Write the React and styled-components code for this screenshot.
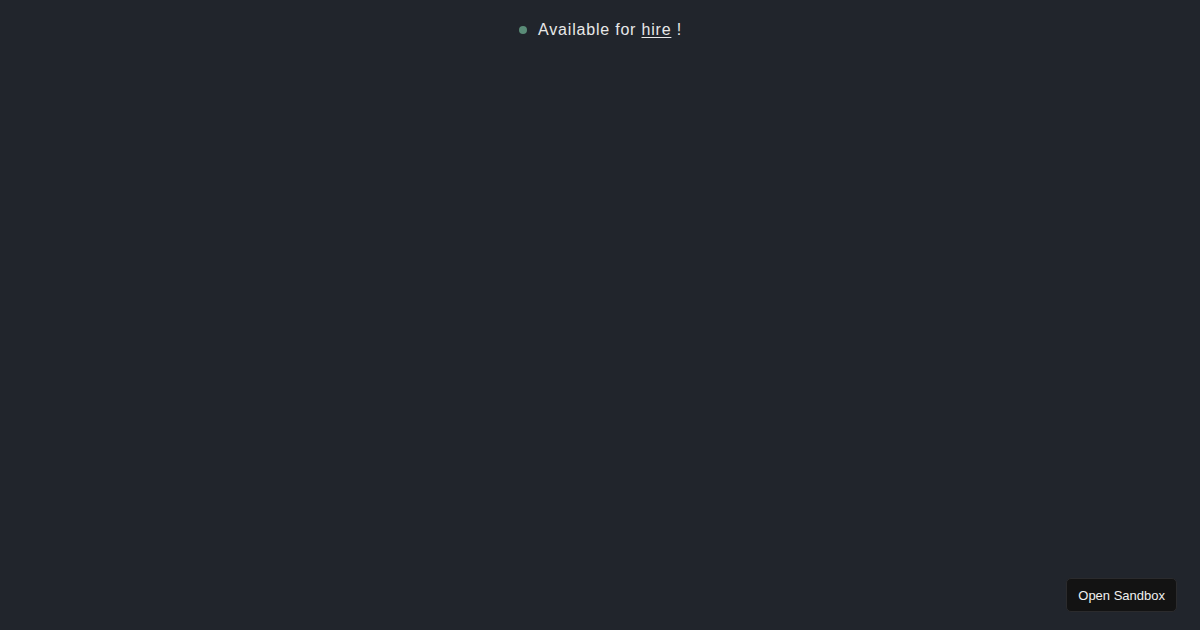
import styled, { createGlobalStyle } from "styled-components";

const Global = createGlobalStyle`
  html, body {
    margin: 0;
    padding: 0;
    background: #21252c;
    font-family: "Liberation Sans", Arial, sans-serif;
  }
`;

const Page = styled.div`
  width: 100vw;
  height: 100vh;
  display: flex;
  flex-direction: column;
  justify-content: space-between;
  align-items: center;
  box-sizing: border-box;
  padding: 20px 23px 18px 24px;
`;

const Status = styled.div`
  display: flex;
  align-items: center;
  gap: 11px;
  color: #e8e8e8;
  font-size: 16px;
  letter-spacing: 0.8px;
  line-height: 20px;
`;

const Dot = styled.span`
  width: 8px;
  height: 8px;
  border-radius: 50%;
  background: #5a8c78;
`;

const Hire = styled.a`
  color: #e8e8e8;
  text-decoration: underline;
  text-underline-offset: 2px;
`;

const Footer = styled.div`
  align-self: flex-end;
`;

const SandboxButton = styled.button`
  background: #131313;
  color: #f0f0f0;
  border: 1px solid #2b2b2d;
  border-radius: 5px;
  height: 34px;
  padding: 0 11px;
  font-family: "Liberation Sans", Arial, sans-serif;
  font-size: 13px;
  cursor: pointer;
`;

export default function App() {
  return (
    <>
      <Global />
      <Page>
        <Status>
          <Dot />
          <span>
            Available for <Hire href="#">hire</Hire> !
          </span>
        </Status>
        <Footer>
          <SandboxButton>Open Sandbox</SandboxButton>
        </Footer>
      </Page>
    </>
  );
}
